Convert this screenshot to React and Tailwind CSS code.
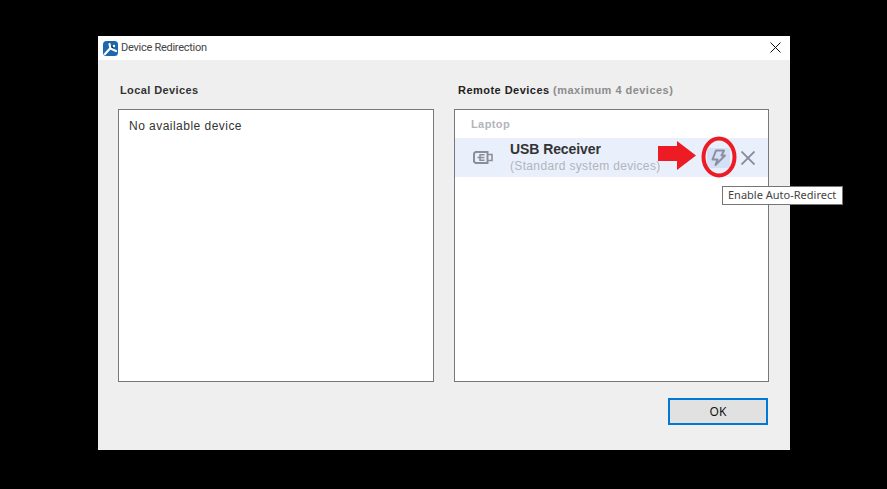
import React from 'react';

const AppLogo = () => (
  <svg width="15" height="15" viewBox="0 0 15 15" className="shrink-0">
    <rect x="0" y="0" width="15" height="15" rx="3.5" fill="#1c67ad" />
    <path d="M2 13 L7 7.5 M6.5 3 L7.5 7.5 L13 10" stroke="#ffffff" strokeWidth="2.2" strokeLinecap="round" />
    <circle cx="11" cy="5" r="1.2" fill="#ffffff" />
  </svg>
);

const UsbIcon = () => (
  <svg width="20" height="13" viewBox="0 0 20 13" fill="none" className="shrink-0">
    <path d="M2.5 1 H14.5 V12 H2.5 L1 10.5 V2.5 Z" stroke="#8d8f98" strokeWidth="2" />
    <path d="M14.5 3.5 H19 V9.5 H14.5" stroke="#8d8f98" strokeWidth="1.6" />
    <path d="M11.5 3.7 H7 V9.3 H11.5 M4.5 6.5 H11.5" stroke="#8d8f98" strokeWidth="1.5" />
  </svg>
);

const App = () => {
  return (
    <div className="w-[887px] h-[489px] bg-black pt-[36px] pl-[98px] overflow-hidden" style={{ fontFamily: '"Liberation Sans", Arial, sans-serif' }}>
      <div className="relative w-[692px] h-[414px] bg-[#efefef] flex flex-col">
        {/* barra de titulo */}
        <div className="h-[24px] bg-white flex items-center pl-[5px] pr-[10px] gap-[3px]">
          <AppLogo />
          <span className="text-[11px] text-[#444444] font-['Roboto',sans-serif] tracking-[-0.27px]">Device Redirection</span>
          <svg width="11" height="11" viewBox="0 0 11 11" className="ml-auto mb-[2px] mr-[-1px]">
            <path d="M0.5 0.5 L10.5 10.5 M10.5 0.5 L0.5 10.5" stroke="#111111" strokeWidth="1" />
          </svg>
        </div>

        <div className="flex gap-[20px] pl-[20px] pt-[23px]">
          {/* Local */}
          <div className="w-[316px]">
            <div className="h-[14px] pl-[2px] text-[11px] leading-[14px] font-bold text-[#333333] tracking-[0.4px]">Local Devices</div>
            <div className="mt-[12px] h-[273px] bg-white border border-[#77787c] pl-[10px] pt-[9px] text-[12px] leading-[14px] text-[#333333] tracking-[0.47px]">
              No available device
            </div>
          </div>

          {/* Remote */}
          <div className="w-[315px]">
            <div className="h-[14px] pl-[4px] text-[11px] leading-[14px] font-bold text-[#222222] tracking-[0.47px]">
              Remote Devices <span className="text-[#8c8c8c]">(maximum 4 devices)</span>
            </div>
            <div className="mt-[12px] h-[273px] bg-white border border-[#77787c]">
              <div className="pl-[16px] pt-[7px] h-[28px] text-[11px] leading-[14px] font-bold text-[#b4b4bc] tracking-[0.4px]">Laptop</div>
              <div className="h-[39px] bg-[#e9f0fb] flex items-center pl-[18px]">
                <UsbIcon />
                <div className="ml-[17px] w-[197px]">
                  <div className="text-[14px] leading-[15px] font-bold text-[#333333] tracking-[-0.08px] whitespace-nowrap">USB Receiver</div>
                  <div className="mt-[2px] text-[12px] leading-[14px] text-[#b4b4bc] tracking-[0.34px] whitespace-nowrap">(Standard system devices)</div>
                </div>
                <div className="w-[23px] h-[20px] rounded-[3px] bg-[#d3e0f5] flex items-center justify-center">
                  <svg width="15" height="18" viewBox="0 0 15 18" fill="none">
                    <path d="M5 1.5 H13 L10.5 6.5 H14 L4.5 16 L6.5 10.5 H1.5 Z" stroke="#8d8f9f" strokeWidth="2" strokeLinejoin="round" />
                  </svg>
                </div>
                <svg width="14" height="14" viewBox="0 0 14 14" className="ml-[11px]">
                  <path d="M0.5 0.5 L13.5 13.5 M13.5 0.5 L0.5 13.5" stroke="#868a98" strokeWidth="1.8" />
                </svg>
              </div>
            </div>
          </div>
        </div>

        <div className="flex justify-end pr-[22px] pt-[16px]">
          <button className="w-[100px] h-[27px] bg-[#e1e1e1] border-2 border-[#0078d7] text-[12px] text-[#111111] font-['Noto_Sans',sans-serif]">OK</button>
        </div>

        {/* flecha y circulo rojos */}
        <svg width="84" height="44" viewBox="0 0 84 44" className="absolute left-[558px] top-[100px]" fill="none">
          <path d="M2 10 H21 V5 L40 19.5 L21 34 V25 H2 Z" fill="#ed1c24" />
          <ellipse cx="63" cy="21" rx="15.5" ry="18.5" stroke="#ed1c24" strokeWidth="4" />
        </svg>

        {/* tooltip */}
        <div className="absolute left-[624px] top-[150px] w-[121px] h-[19px] bg-white border border-[#767676] flex items-center pl-[5px] text-[11px] text-[#444444] whitespace-nowrap font-['Noto_Sans',sans-serif]">
          Enable Auto-Redirect
        </div>
      </div>
    </div>
  );
};

export default App;
